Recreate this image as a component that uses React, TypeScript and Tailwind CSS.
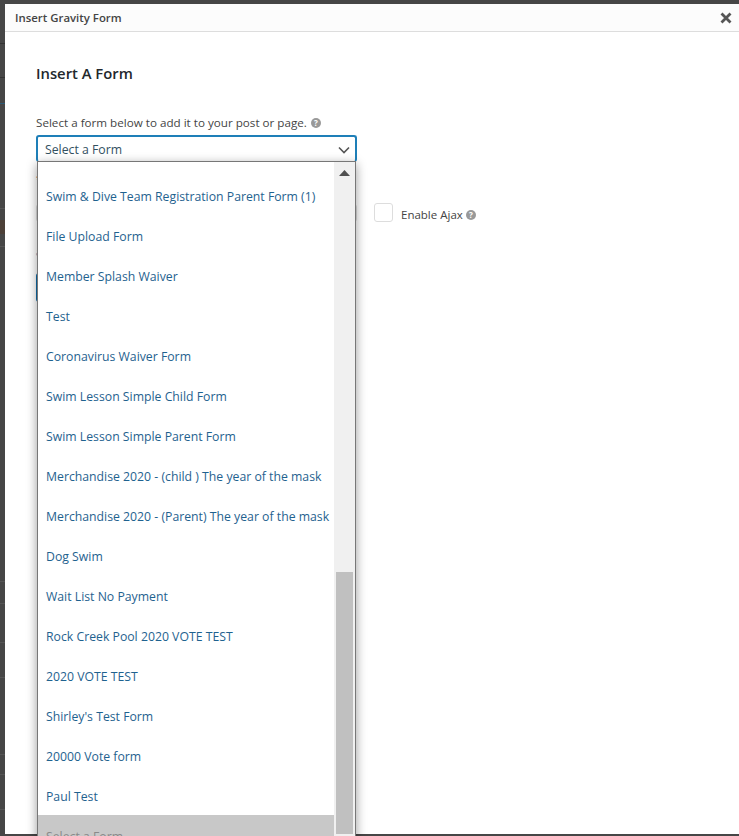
const forms = [
  "Swim & Dive Team Registration Parent Form (1)",
  "File Upload Form",
  "Member Splash Waiver",
  "Test",
  "Coronavirus Waiver Form",
  "Swim Lesson Simple Child Form",
  "Swim Lesson Simple Parent Form",
  "Merchandise 2020 - (child ) The year of the mask",
  "Merchandise 2020 - (Parent) The year of the mask",
  "Dog Swim",
  "Wait List No Payment",
  "Rock Creek Pool 2020 VOTE TEST",
  "2020 VOTE TEST",
  "Shirley's Test Form",
  "20000 Vote form",
  "Paul Test",
]

function HelpIcon() {
  return (
    <span className="inline-flex h-[10px] w-[10px] items-center justify-center rounded-full bg-[#999] text-[8px] leading-none font-bold text-white">
      ?
    </span>
  )
}

// the page behind the modal, only a 5px strip of it shows
function BackdropStrip() {
  return (
    <div className="flex w-[5px] shrink-0 flex-col">
      <div className="h-[44px] border-b border-[#333]" />
      <div className="h-[34px] border-b border-[#333]" />
      <div className="mt-[15px] h-[11px] border-b border-[#2c5a75]" />
      <div className="h-[105px] border-b border-[#555]" />
      <div className="mt-[11px] h-[14px] bg-[#4c4038]" />
      <div className="h-[13px] border-b border-[#555]" />
      <div className="h-[335px] border-b border-[#555]" />
      <div className="h-[22px] border-b border-[#555]" />
      <div className="h-[39px] border-b border-[#555]" />
      <div className="h-[35px] border-b border-[#555]" />
      <div className="h-[77px] border-b border-[#555]" />
      <div className="h-[20px] border-b border-[#555]" />
      <div className="h-[35px] border-b border-[#555]" />
    </div>
  )
}

export default function App() {
  return (
    <div className="flex h-[836px] w-[739px] overflow-hidden bg-[#464646] font-['Open_Sans',sans-serif] text-xs text-[#3c434a]">
      <BackdropStrip />
      <div className="flex min-w-0 flex-1 flex-col pt-1 pb-0.5">
        <div className="relative flex min-h-0 flex-1 flex-col bg-white">
          <div className="flex h-[28px] shrink-0 items-center justify-between border-b border-[#dddddd] bg-[#fcfcfc] pr-[7px] pl-[10px]">
            <span className="text-[11.4px] font-semibold text-[#444]">Insert Gravity Form</span>
            <svg width="12" height="12" viewBox="0 0 12 12">
              <path d="M1.5 1.5 L10.5 10.5 M10.5 1.5 L1.5 10.5" stroke="#555" strokeWidth="2.8" />
            </svg>
          </div>

          <div className="flex flex-col pt-[31px] pl-[31px]">
            <h1 className="text-[14.8px] leading-[20px] font-semibold text-[#23282d]">Insert A Form</h1>
            <p className="mt-[31px] flex h-[16px] items-center gap-1 pt-[2px] text-[11.65px] text-[#444]">
              Select a form below to add it to your post or page. <HelpIcon />
            </p>
            <div className="mt-[5px] flex h-[27px] w-[321px] items-center justify-between rounded-[3px] border-2 border-b-0 border-[#1e7fb8] pr-[5px] pl-[7px] text-[12.25px] text-[#32505f]">
              <span className="pt-[2px]">Select a Form</span>
              <svg width="12" height="8" viewBox="0 0 12 8" fill="none">
                <path d="M1 1.5 L6 6.5 L11 1.5" stroke="#555" strokeWidth="1.6" />
              </svg>
            </div>
            <div className="mt-[13px] h-[8px] text-[10px] leading-[8px] text-[#c2410c]">*</div>
            <div className="mt-[20px] flex h-[19px] items-center">
              <div className="h-[18px] w-[321px] rounded-[3px] border border-[#ddd]" />
              <div className="ml-[17px] h-[19px] w-[19px] rounded-[3px] border border-[#ddd] bg-white" />
              <span className="ml-[8px] pt-[5px] text-[11.5px] text-[#444]">Enable Ajax</span>
              <span className="ml-[3px] flex pt-[5px]">
                <HelpIcon />
              </span>
            </div>
            <div className="mt-[24px] h-[12px] text-[10px] leading-[12px] text-[#1e7fb8]">a</div>
            <div className="mt-[15px] h-[29px] w-[80px] rounded-[3px] bg-[#0e6ba8]" />
          </div>

          <div className="absolute top-[157px] left-[32px] flex h-[680px] w-[319px] border border-[#777] bg-white shadow-[0_3px_10px_rgba(0,0,0,0.4)]">
            <ul className="w-[296px] pt-[13px]">
              {forms.map((f) => (
                <li key={f} className="flex h-[40px] items-center pt-[5px] pl-[8px] text-[12.25px] whitespace-nowrap text-[#1f628f]">
                  {f}
                </li>
              ))}
              <li className="flex h-[40px] items-center bg-[#c8c8c8] pt-[5px] pl-[8px] text-[12.25px] text-[#8a8a8a]">Select a Form</li>
            </ul>
            <div className="relative w-[21px] bg-[#f0f0f0]">
              <svg className="absolute top-[8px] left-[5px]" width="11" height="6" viewBox="0 0 11 6">
                <path d="M5.5 0 L11 6 L0 6 Z" fill="#505050" />
              </svg>
              <div className="absolute top-[410px] left-[2px] h-[262px] w-[17px] bg-[#c0c0c0]" />
            </div>
          </div>
        </div>
      </div>
    </div>
  )
}
